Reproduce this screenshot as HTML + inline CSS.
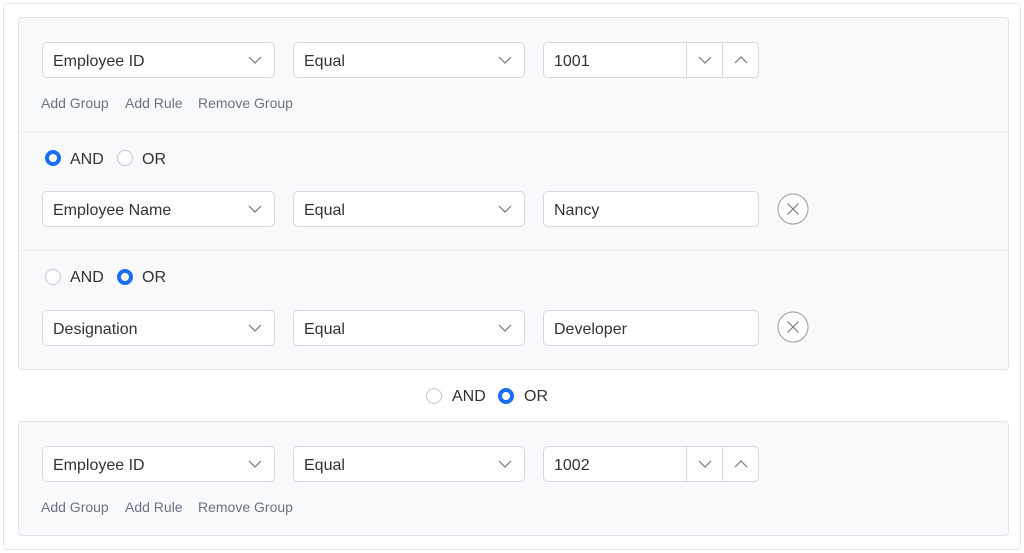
<!DOCTYPE html>
<html><head><style>
*{box-sizing:border-box;margin:0;padding:0}
body{width:1024px;height:553px;background:#fff;font-family:"Liberation Sans",sans-serif;position:relative;overflow:hidden}
.a{position:absolute}
.outer{left:3px;top:3px;width:1018px;height:547px;border:1px solid #e5e7eb;border-radius:4px}
.grp{left:18px;width:991px;background:#f8f9fb;border:1px solid #e2e4e8;border-radius:4px}
.in{height:36px;background:#fff;border:1px solid #d6d9de;border-radius:5px;font-size:16px;color:#333;line-height:34px;padding-top:2px;padding-left:10px}
.chev{position:absolute;right:12px;top:12px}
.lk{font-size:14px;color:#6b7280}
.hr{left:19px;width:989px;border-top:1px dotted #e5e7eb;height:0}
.rd{width:16px;height:16px;border-radius:50%;border:1px solid #c4c8ce;background:#fff}
.rd.on{border:4.5px solid #1a6ef5}
.rt{font-size:16px;color:#333}
.sp{border-left:1px solid #d6d9de;height:34px;width:36px;top:0;position:absolute}
</style></head><body>
<div class="a outer"></div>
<div class="a grp" style="top:17px;height:353px"></div>
<div class="a grp" style="top:421px;height:115px"></div>
<div class="a hr" style="top:131px"></div>
<div class="a hr" style="top:250px"></div>

<div class="a in" style="left:42px;top:42px;width:233px">Employee ID<svg class="chev" width="14" height="10"><path d="M1 2l6 6 6-6" fill="none" stroke="#777" stroke-width="1.2"/></svg></div>
<div class="a in" style="left:293px;top:42px;width:232px">Equal<svg class="chev" width="14" height="10"><path d="M1 2l6 6 6-6" fill="none" stroke="#777" stroke-width="1.2"/></svg></div>
<div class="a in" style="left:543px;top:42px;width:216px">1001
<div class="sp" style="left:142px"><svg style="position:absolute;left:11px;top:12px" width="14" height="10"><path d="M1 2l6 6 6-6" fill="none" stroke="#777" stroke-width="1.2"/></svg></div>
<div class="sp" style="left:178px"><svg style="position:absolute;left:11px;top:12px" width="14" height="10"><path d="M1 8l6-6 6 6" fill="none" stroke="#777" stroke-width="1.2"/></svg></div></div>
<div class="a lk" style="left:41px;top:95px">Add Group</div>
<div class="a lk" style="left:125px;top:95px">Add Rule</div>
<div class="a lk" style="left:198px;top:95px">Remove Group</div>

<div class="a rd on" style="left:45px;top:150px"></div><div class="a rt" style="left:70px;top:151px">AND</div>
<div class="a rd" style="left:117px;top:150px"></div><div class="a rt" style="left:142px;top:151px">OR</div>
<div class="a in" style="left:42px;top:191px;width:233px">Employee Name<svg class="chev" width="14" height="10"><path d="M1 2l6 6 6-6" fill="none" stroke="#777" stroke-width="1.2"/></svg></div>
<div class="a in" style="left:293px;top:191px;width:232px">Equal<svg class="chev" width="14" height="10"><path d="M1 2l6 6 6-6" fill="none" stroke="#777" stroke-width="1.2"/></svg></div>
<div class="a in" style="left:543px;top:191px;width:216px">Nancy</div>
<svg class="a" style="left:777px;top:193px" width="32" height="32"><circle cx="16" cy="16" r="15" fill="#fff" stroke="#999"/><path d="M10.5 10.5l11 11M21.5 10.5l-11 11" stroke="#777" stroke-width="1.1"/></svg>

<div class="a rd" style="left:45px;top:269px"></div><div class="a rt" style="left:70px;top:269px">AND</div>
<div class="a rd on" style="left:117px;top:269px"></div><div class="a rt" style="left:142px;top:269px">OR</div>
<div class="a in" style="left:42px;top:310px;width:233px">Designation<svg class="chev" width="14" height="10"><path d="M1 2l6 6 6-6" fill="none" stroke="#777" stroke-width="1.2"/></svg></div>
<div class="a in" style="left:293px;top:310px;width:232px">Equal<svg class="chev" width="14" height="10"><path d="M1 2l6 6 6-6" fill="none" stroke="#777" stroke-width="1.2"/></svg></div>
<div class="a in" style="left:543px;top:310px;width:216px">Developer</div>
<svg class="a" style="left:777px;top:311px" width="32" height="32"><circle cx="16" cy="16" r="15" fill="#fff" stroke="#999"/><path d="M10.5 10.5l11 11M21.5 10.5l-11 11" stroke="#777" stroke-width="1.1"/></svg>

<div class="a rd" style="left:426px;top:388px"></div><div class="a rt" style="left:452px;top:388px">AND</div>
<div class="a rd on" style="left:498px;top:388px"></div><div class="a rt" style="left:524px;top:388px">OR</div>

<div class="a in" style="left:42px;top:446px;width:233px">Employee ID<svg class="chev" width="14" height="10"><path d="M1 2l6 6 6-6" fill="none" stroke="#777" stroke-width="1.2"/></svg></div>
<div class="a in" style="left:293px;top:446px;width:232px">Equal<svg class="chev" width="14" height="10"><path d="M1 2l6 6 6-6" fill="none" stroke="#777" stroke-width="1.2"/></svg></div>
<div class="a in" style="left:543px;top:446px;width:216px">1002
<div class="sp" style="left:142px"><svg style="position:absolute;left:11px;top:12px" width="14" height="10"><path d="M1 2l6 6 6-6" fill="none" stroke="#777" stroke-width="1.2"/></svg></div>
<div class="sp" style="left:178px"><svg style="position:absolute;left:11px;top:12px" width="14" height="10"><path d="M1 8l6-6 6 6" fill="none" stroke="#777" stroke-width="1.2"/></svg></div></div>
<div class="a lk" style="left:41px;top:499px">Add Group</div>
<div class="a lk" style="left:125px;top:499px">Add Rule</div>
<div class="a lk" style="left:198px;top:499px">Remove Group</div>
</body></html>
